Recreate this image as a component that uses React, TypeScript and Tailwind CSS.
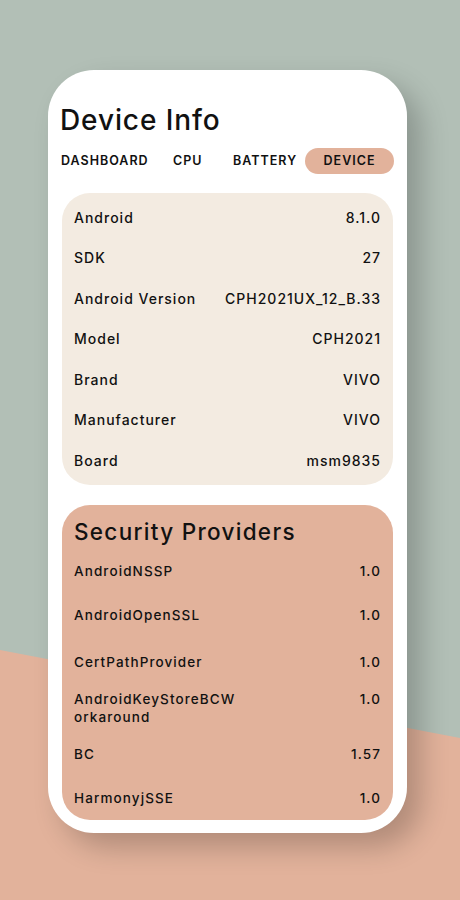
import React from "react";

const font = { fontFamily: 'Inter, "DejaVu Sans", sans-serif' };

const deviceRows: [string, string][] = [
  ["Android", "8.1.0"],
  ["SDK", "27"],
  ["Android Version", "CPH2021UX_12_B.33"],
  ["Model", "CPH2021"],
  ["Brand", "VIVO"],
  ["Manufacturer", "VIVO"],
  ["Board", "msm9835"],
];

const row = "flex justify-between items-start text-[13.5px] leading-[18px] font-medium tracking-[1.1px]";

export default function App() {
  return (
    <div
      className="relative w-[460px] h-[900px] overflow-hidden bg-[#b2bfb6] text-[#111]"
      style={font}
    >
      <svg className="absolute inset-0" width="460" height="900" viewBox="0 0 460 900">
        <polygon points="0,650 460,738 460,900 0,900" fill="#e2b29b" />
      </svg>
      <div className="relative pt-[70px] pl-[48px]">
        <div className="w-[359px] h-[763px] rounded-[46px] bg-white shadow-[14px_14px_28px_rgba(0,0,0,0.22)] flex flex-col px-[13px]">
          <h1 className="mt-[32px] ml-[-1px] text-[28px] leading-[36px] font-medium tracking-[0.9px]">
            Device Info
          </h1>
          <div className="mt-[10px] flex items-center text-[12.5px] font-semibold tracking-[1px] h-[26px]">
            <span className="w-[112px]">DASHBOARD</span>
            <span className="w-[60px]">CPU</span>
            <span className="w-[72px]">BATTERY</span>
            <span className="w-[89px] h-[26px] rounded-full bg-[#e2b29b] flex items-center justify-center">
              DEVICE
            </span>
          </div>
          <div className="mt-[19px] mx-[1px] rounded-[28px] bg-[#f3ebe1] px-[12px] pt-[4px] pb-[4px] flex flex-col">
            {deviceRows.map(([k, v]) => (
              <div
                key={k}
                className="h-[40.5px] flex items-center justify-between text-[14px] font-medium tracking-[1px]"
              >
                <span>{k}</span>
                <span>{v}</span>
              </div>
            ))}
          </div>
          <div className="mt-[20px] mx-[1px] rounded-[28px] bg-[#e2b29b] px-[12px] pt-[12px] flex flex-col h-[315px]">
            <div className="text-[22.5px] leading-[30px] font-medium tracking-[1.3px]">
              Security Providers
            </div>
            <div className={"mt-[15px] h-[30px] " + row}>
              <span>AndroidNSSP</span>
              <span>1.0</span>
            </div>
            <div className={"mt-[14px] h-[30px] " + row}>
              <span>AndroidOpenSSL</span>
              <span>1.0</span>
            </div>
            <div className={"mt-[17px] h-[30px] " + row}>
              <span>CertPathProvider</span>
              <span>1.0</span>
            </div>
            <div className={"mt-[7px] " + row + " leading-[17px]"}>
              <span>
                AndroidKeyStoreBCW
                <br />
                orkaround
              </span>
              <span>1.0</span>
            </div>
            <div className={"mt-[19px] h-[30px] " + row}>
              <span>BC</span>
              <span>1.57</span>
            </div>
            <div className={"mt-[14px] h-[30px] " + row}>
              <span>HarmonyjSSE</span>
              <span>1.0</span>
            </div>
          </div>
        </div>
      </div>
    </div>
  );
}
